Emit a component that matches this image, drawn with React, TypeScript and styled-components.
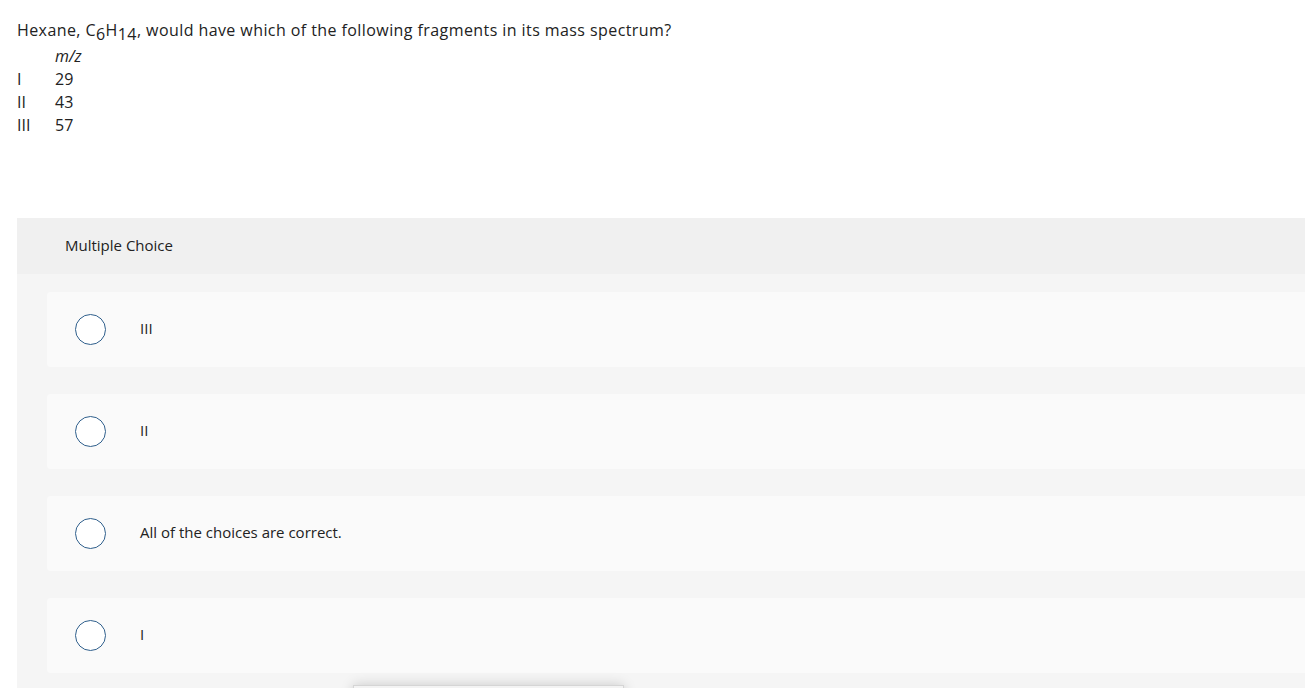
import React from "react";
import styled, { createGlobalStyle } from "styled-components";

const Global = createGlobalStyle`
  html, body { margin: 0; padding: 0; background: #ffffff; overflow: hidden; }
  body { font-family: "Open Sans", "Liberation Sans", sans-serif; color: #222; }
`;

const Page = styled.div`
  width: 1305px;
  height: 688px;
  position: relative;
  overflow: hidden;
  padding: 17px 0 0 17px;
  box-sizing: border-box;
`;

const Question = styled.p`
  margin: 0;
  font-size: 16px;
  line-height: 26px;
  color: #222;
  letter-spacing: 0.42px;
  sub { font-size: 16px; vertical-align: -4px; line-height: 0; }
`;

const Table = styled.div`
  display: grid;
  grid-template-columns: 38px auto;
  grid-auto-rows: 23px;
  margin-top: 1px;
  font-size: 16px;
  line-height: 24px;
  color: #222;
`;

const Italic = styled.span`
  font-style: italic;
`;

const Panel = styled.section`
  margin-top: 82px;
  width: 1320px;
  background: #f5f5f5;
  padding-bottom: 20px;
`;

const PanelHeader = styled.div`
  height: 56px;
  background: #f0f0f0;
  display: flex;
  align-items: center;
  padding: 0 0 2px 48px;
  box-sizing: border-box;
  font-size: 15px;
  color: #222;
`;

const Options = styled.div`
  display: flex;
  flex-direction: column;
  gap: 27px;
  padding: 18px 0 0 30px;
`;

const Option = styled.label`
  height: 75px;
  box-sizing: border-box;
  background: #fafafa;
  border-radius: 4px;
  display: flex;
  align-items: center;
  padding-left: 28px;
  gap: 34px;
  font-size: 15px;
  color: #222;
`;

const Label = styled.span`
  position: relative;
  top: -2px;
`;

const Radio = styled.span`
  width: 29px;
  height: 29px;
  border-radius: 50%;
  border: 1.5px solid #2f5f8c;
  background: #ffffff;
  flex: none;
`;

const Floating = styled.div`
  position: absolute;
  left: 353px;
  top: 685px;
  width: 269px;
  height: 40px;
  background: #f3f3f3;
  border: 1px solid #d5d5d5;
  box-shadow: 0 0 12px rgba(0, 0, 0, 0.18);
`;

const rows: [string, string][] = [
  ["I", "29"],
  ["II", "43"],
  ["III", "57"],
];

const choices = ["III", "II", "All of the choices are correct.", "I"];

export default function App() {
  return (
    <Page>
      <Global />
      <Question>
        Hexane, C<sub>6</sub>H<sub>14</sub>, would have which of the following fragments in its mass spectrum?
      </Question>
      <Table>
        <span />
        <Italic>m/z</Italic>
        {rows.map(([r, v]) => (
          <React.Fragment key={r}>
            <span>{r}</span>
            <span>{v}</span>
          </React.Fragment>
        ))}
      </Table>
      <Panel>
        <PanelHeader>Multiple Choice</PanelHeader>
        <Options>
          {choices.map((c) => (
            <Option key={c}>
              <Radio />
              <Label>{c}</Label>
            </Option>
          ))}
        </Options>
      </Panel>
      <Floating />
    </Page>
  );
}
